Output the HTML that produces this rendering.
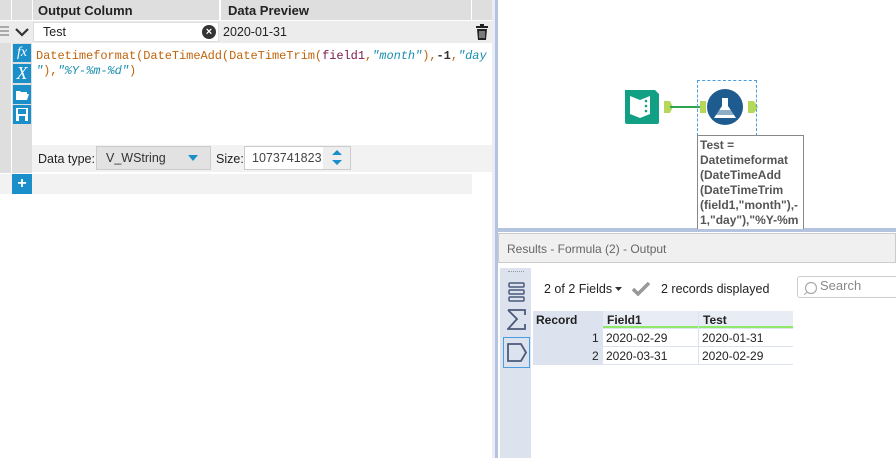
<!DOCTYPE html>
<html><head><style>
*{margin:0;padding:0;box-sizing:border-box}
body{width:896px;height:458px;overflow:hidden;background:#fff;font-family:"Liberation Sans",sans-serif;font-size:12px;color:#222;position:relative}
.a{position:absolute}
.mono{font-family:"Liberation Mono",monospace;font-size:12px;letter-spacing:-0.05px}
</style></head><body>
<div class="a" style="left:0;top:0;width:492px;height:20px;background:#dedede"></div>
<div class="a" style="left:11px;top:0;width:1px;height:173px;background:#fff"></div>
<div class="a" style="left:32px;top:0;width:1px;height:20px;background:#fff"></div>
<div class="a" style="left:219px;top:0;width:2px;height:20px;background:#fff"></div>
<div class="a" style="left:471px;top:0;width:1px;height:20px;background:#fff"></div>
<div class="a" style="left:38px;top:3px;font-weight:bold;font-size:13px">Output Column</div>
<div class="a" style="left:228px;top:3px;font-weight:bold;font-size:13px">Data Preview</div>
<div class="a" style="left:0;top:21px;width:492px;height:22px;background:#ececec"></div>
<div class="a" style="left:0;top:43px;width:32px;height:130px;background:#dedede"></div>
<div class="a" style="left:11px;top:43px;width:1px;height:130px;background:#fff"></div>
<div class="a" style="left:0;top:26px;width:9px;height:2px;background:#aaa;box-shadow:0 4px #aaa,0 8px #aaa"></div>
<svg class="a" style="left:15px;top:28px" width="14" height="9"><path d="M1 1l6 6 6-6" stroke="#333" stroke-width="2.2" fill="none"/></svg>
<div class="a" style="left:33px;top:22px;width:186px;height:20px;background:#fff;border:1px solid #ddd"></div>
<div class="a" style="left:43px;top:25px;font-size:12.5px">Test</div>
<div class="a" style="left:202px;top:25px;width:14px;height:14px;border-radius:50%;background:#333;color:#fff;font-size:11px;line-height:14px;text-align:center;font-weight:bold">×</div>
<div class="a" style="left:223px;top:25px;font-size:12.5px">2020-01-31</div>
<svg class="a" style="left:475px;top:24px" width="14" height="16"><rect x="1" y="2" width="12" height="2" fill="#222"/><rect x="5" y="0" width="4" height="2" fill="#222"/><path d="M2 5h10l-1 11H3z" fill="#222"/><path d="M5 7v7M7 7v7M9 7v7" stroke="#fff" stroke-width="0.8"/></svg>
<div class="a" style="left:32px;top:43px;width:460px;height:102px;background:#fff"></div>
<div class="a" style="left:13px;top:44px;width:18px;height:18px;background:#1a8fc9;color:#fff;font-family:'Liberation Serif',serif;font-style:italic;font-size:14px;text-align:center;line-height:17px">fx</div>
<div class="a" style="left:13px;top:64px;width:18px;height:19px;background:#1a8fc9;color:#fff;font-family:'Liberation Serif',serif;font-style:italic;font-size:18px;text-align:center;line-height:19px">X</div>
<div class="a" style="left:13px;top:85px;width:18px;height:19px;background:#1a8fc9"><svg width="18" height="19"><path d="M3 6h4l1 1h6v2H5l-2 6z M5 9h11l-2 6H3z" fill="#fff"/></svg></div>
<div class="a" style="left:13px;top:105px;width:18px;height:19px;background:#1a8fc9"><svg width="18" height="19"><rect x="3" y="3" width="12" height="13" fill="#fff"/><rect x="5" y="4" width="8" height="5" fill="#1a8fc9"/><rect x="6" y="11" width="6" height="5" fill="#1a8fc9"/></svg></div>
<div class="a mono" style="left:36px;top:49px;line-height:15px;white-space:pre;color:#c0640c">Datetimeformat(DateTimeAdd(DateTimeTrim(<span style="color:#7a1a4a">field1</span>,<i style="color:#1a8fb0">"month"</i>),<b style="color:#333">-1</b>,<i style="color:#1a8fb0">"day</i>
<i style="color:#1a8fb0">"</i>),<i style="color:#1a8fb0">"%Y-%m-%d"</i>)</div>
<div class="a" style="left:32px;top:145px;width:460px;height:27px;background:#f2f2f2"></div>
<div class="a" style="left:38px;top:152px;font-size:12.5px">Data type:</div>
<div class="a" style="left:96px;top:146px;width:115px;height:24px;background:#e2e2e2;border:1px solid #ccc"></div>
<div class="a" style="left:106px;top:151px;font-size:12.5px;color:#333">V_WString</div>
<svg class="a" style="left:188px;top:155px" width="10" height="6"><path d="M0 0h10L5 6z" fill="#1a8fc9"/></svg>
<div class="a" style="left:216px;top:152px;font-size:12.5px">Size:</div>
<div class="a" style="left:244px;top:146px;width:107px;height:24px;background:#fff;border:1px solid #ccc"></div>
<div class="a" style="left:323px;top:147px;width:27px;height:22px;background:#eee"></div>
<div class="a" style="left:252px;top:151px;font-size:12.5px;color:#444">1073741823</div>
<svg class="a" style="left:331px;top:149px" width="12" height="17"><path d="M1 6L6 1l5 5z M1 11l5 5 5-5z" fill="#1a8fc9"/></svg>
<div class="a" style="left:0;top:174px;width:472px;height:20px;background:#f2f2f2"></div>
<div class="a" style="left:12px;top:174px;width:20px;height:20px;background:#1a8fc9;color:#fff;font-weight:bold;font-size:16px;text-align:center;line-height:19px">+</div>
<div class="a" style="left:492px;top:0;width:3px;height:458px;background:#e9eef6"></div>
<div class="a" style="left:495px;top:0;width:3px;height:458px;background:#b4c4de"></div>
<div class="a" style="left:498px;top:0;width:398px;height:229px;background:#fff"></div>
<div class="a" style="left:498px;top:228px;width:398px;height:4px;background:#b4c4de"></div>
<svg class="a" style="left:620px;top:88px" width="140" height="40">
<path d="M5 2h30l4 4v28a2 2 0 0 1-2 2H7a2 2 0 0 1-2-2z" fill="#12a084"/>
<path d="M10 8l10 4v18l-10-4z M20 12l10-4v18l-10 4z" fill="#fff"/><circle cx="26" cy="13" r="1.3" fill="#12a084"/><circle cx="26" cy="18" r="1.3" fill="#12a084"/><circle cx="26" cy="23" r="1.3" fill="#12a084"/>
<path d="M44 13h6l3 6-3 6h-6z" fill="#b6d85a"/>
<line x1="50" y1="19" x2="82" y2="19" stroke="#2fa44e" stroke-width="2"/>
<rect x="80" y="13" width="6" height="12" fill="#b6d85a"/>
<circle cx="105" cy="19" r="18" fill="#1e5b8f"/>
<path d="M101 10h8M102 10v8l-8 12h22l-8-12v-8" fill="#fff"/><path d="M96 27h18l-3-5h-12z" fill="#1e5b8f" opacity=".5"/>
<path d="M128 13h6l4 6-4 6h-6z" fill="#b6d85a"/>
</svg>
<div class="a" style="left:697px;top:80px;width:60px;height:56px;border:1px dashed #4a9ee0"></div>
<div class="a" style="left:697px;top:135px;width:107px;height:94px;border:1px solid #888;border-bottom:none;background:#fff;padding:2px 2px;font-weight:bold;font-size:12px;line-height:15px;color:#555;overflow:hidden">Test =<br>Datetimeformat<br>(DateTimeAdd<br>(DateTimeTrim<br>(field1,"month"),-<br>1,"day"),"%Y-%m</div>
<div class="a" style="left:498px;top:233px;width:398px;height:30px;background:#f0f0f0;border:1px solid #ccc"></div>
<div class="a" style="left:507px;top:242px;font-size:12px;color:#666">Results - Formula (2) - Output</div>
<div class="a" style="left:498px;top:263px;width:398px;height:195px;background:#fff"></div>
<div class="a" style="left:500px;top:268px;width:31px;height:190px;background:#dde3ee"></div>
<div class="a" style="left:508px;top:271px;width:16px;border-top:1px dotted #999"></div>
<svg class="a" style="left:508px;top:282px" width="17" height="20"><rect x="1" y="1" width="15" height="4" rx="1" fill="none" stroke="#4a5a7a" stroke-width="1.5"/><rect x="1" y="8" width="15" height="4" rx="1" fill="none" stroke="#4a5a7a" stroke-width="1.5"/><rect x="1" y="15" width="15" height="4" rx="1" fill="none" stroke="#4a5a7a" stroke-width="1.5"/></svg>
<svg class="a" style="left:507px;top:309px" width="19" height="21"><path d="M1 1h17v5M1 1l9 9-9 10h17v-5" fill="none" stroke="#4a5a7a" stroke-width="1.8"/></svg>
<div class="a" style="left:503px;top:337px;width:27px;height:31px;border:1px solid #4a9ee0"></div>
<svg class="a" style="left:507px;top:343px" width="20" height="19"><path d="M1 1h13l5 8.5-5 8.5H1z" fill="none" stroke="#4a5a7a" stroke-width="1.8"/></svg>
<div class="a" style="left:544px;top:282px;font-size:12.5px">2 of 2 Fields</div>
<svg class="a" style="left:615px;top:287px" width="8" height="5"><path d="M0 0h7L3.5 4z" fill="#333"/></svg>
<svg class="a" style="left:632px;top:281px" width="18" height="15"><path d="M1 8l5 5L17 2" stroke="#999" stroke-width="3.5" fill="none"/></svg>
<div class="a" style="left:661px;top:282px;font-size:12.5px">2 records displayed</div>
<div class="a" style="left:797px;top:276px;width:110px;height:22px;border:1px solid #ccc;border-radius:3px;background:#fff"></div>
<svg class="a" style="left:804px;top:281px" width="14" height="14"><circle cx="7" cy="7" r="5.5" fill="none" stroke="#aaa" stroke-width="1.2"/><path d="M3 11l-3 3" stroke="#aaa"/></svg>
<div class="a" style="left:820px;top:278px;font-size:13px;color:#888">Search</div>
<div class="a" style="left:533px;top:311px;width:260px;height:54px;background:#dde3ee"></div>
<div class="a" style="left:536px;top:313px;font-weight:bold">Record</div>
<div class="a" style="left:603px;top:311px;width:95px;height:17px;background:#e8ecf4;border-bottom:2px solid #8ee86a"></div>
<div class="a" style="left:699px;top:311px;width:94px;height:17px;background:#e8ecf4;border-bottom:2px solid #8ee86a"></div>
<div class="a" style="left:607px;top:313px;font-weight:bold">Field1</div>
<div class="a" style="left:703px;top:313px;font-weight:bold">Test</div>
<div class="a" style="left:603px;top:329px;width:95px;height:17px;background:#fff"></div>
<div class="a" style="left:699px;top:329px;width:94px;height:17px;background:#fff"></div>
<div class="a" style="left:603px;top:347px;width:95px;height:17px;background:#fff"></div>
<div class="a" style="left:699px;top:347px;width:94px;height:17px;background:#fff"></div>
<div class="a" style="left:592px;top:331px">1</div>
<div class="a" style="left:592px;top:349px">2</div>
<div class="a" style="left:606px;top:331px">2020-02-29</div>
<div class="a" style="left:702px;top:331px">2020-01-31</div>
<div class="a" style="left:606px;top:349px">2020-03-31</div>
<div class="a" style="left:702px;top:349px">2020-02-29</div>
</body></html>
